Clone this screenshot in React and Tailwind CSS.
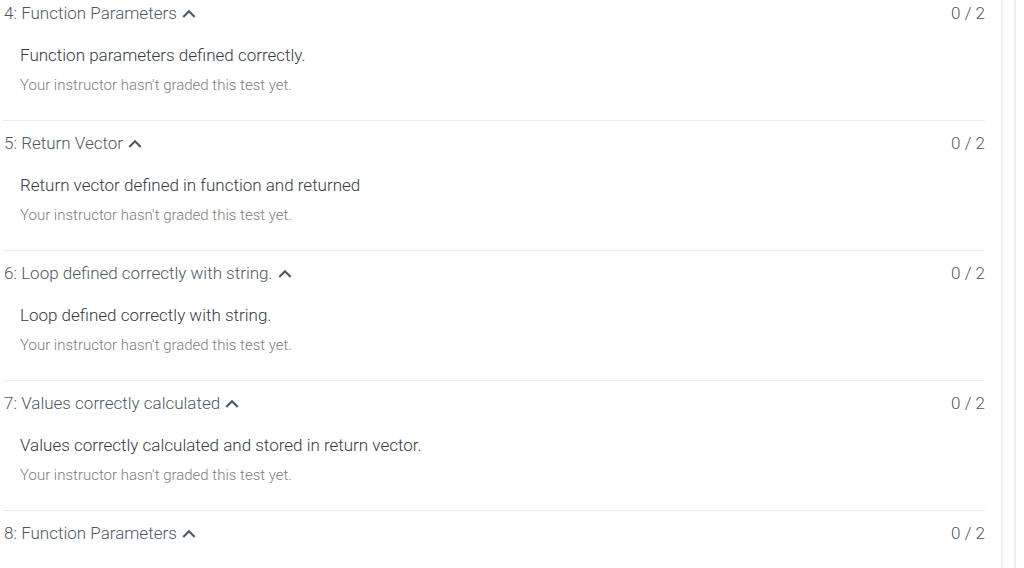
import React from "react";

const rows = [
  { n: 4, title: "Function Parameters", desc: "Function parameters defined correctly." },
  { n: 5, title: "Return Vector", desc: "Return vector defined in function and returned" },
  { n: 6, title: "Loop defined correctly with string.", desc: "Loop defined correctly with string." },
  { n: 7, title: "Values correctly calculated", desc: "Values correctly calculated and stored in return vector." },
  { n: 8, title: "Function Parameters", desc: "Function parameters defined correctly." },
];

function Caret() {
  return (
    <svg width="26" height="26" viewBox="0 0 24 24" className="-ml-[1px]" fill="#4b5966">
      <path d="M7.41 15.41 12 10.83l4.59 4.58L18 14l-6-6-6 6z" />
    </svg>
  );
}

export default function App() {
  return (
    <div className="h-[568px] w-[1024px] overflow-hidden bg-white flex" style={{ fontFamily: "Roboto, 'Liberation Sans', sans-serif" }}>
      <div className="w-[1001px] shrink-0">
        <div className="-mt-[9px] pl-[3px] pr-[16px]">
          {rows.map((r) => (
            <div key={r.n} className="border-b border-[#ebebeb] pt-[11px] pb-[25px]">
              <div className="flex items-center justify-between h-[24px] text-[17px] font-light text-[#4b5966]">
                <div className="flex items-center pl-[1px]">
                  <span>{r.n}: {r.title}</span>
                  <Caret />
                </div>
                <span>0 / 2</span>
              </div>
              <div className="mt-[17px] pl-[17px] h-[24px] leading-[24px] text-[17px] font-light text-[#333b42]">{r.desc}</div>
              <div className="mt-[8px] pl-[17px] h-[20px] leading-[20px] text-[15px] font-light text-[#7d7d7d]">Your instructor hasn't graded this test yet.</div>
            </div>
          ))}
        </div>
      </div>
      <div className="w-[15px] h-full border-l-2 border-r-2 border-[#efefef]" />
      <div className="flex-1" />
    </div>
  );
}
